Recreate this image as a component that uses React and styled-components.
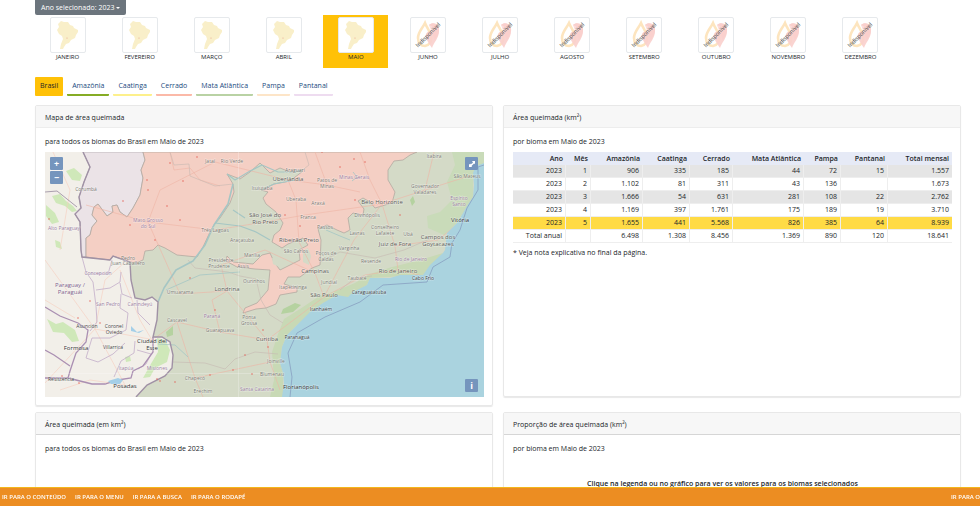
import React, { useState } from 'react'
import styled, { createGlobalStyle } from 'styled-components'

const months = [
  'JANEIRO', 'FEVEREIRO', 'MARÇO', 'ABRIL', 'MAIO', 'JUNHO',
  'JULHO', 'AGOSTO', 'SETEMBRO', 'OUTUBRO', 'NOVEMBRO', 'DEZEMBRO',
]

const biomes = [
  { name: 'Brasil', color: '#ffc107' },
  { name: 'Amazônia', color: '#86ac25' },
  { name: 'Caatinga', color: '#fdf08c' },
  { name: 'Cerrado', color: '#fbb9a8' },
  { name: 'Mata Atlântica', color: '#b9d2a4' },
  { name: 'Pampa', color: '#fde5c8' },
  { name: 'Pantanal', color: '#eedcf0' },
]

const columns = [
  { name: 'Ano', width: 53 },
  { name: 'Mês', width: 25 },
  { name: 'Amazônia', width: 52 },
  { name: 'Caatinga', width: 47 },
  { name: 'Cerrado', width: 43 },
  { name: 'Mata Atlântica', width: 71 },
  { name: 'Pampa', width: 37 },
  { name: 'Pantanal', width: 47 },
  { name: 'Total mensal', width: 64 },
]

const rows = [
  ['2023', '1', '906', '335', '185', '44', '72', '15', '1.557'],
  ['2023', '2', '1.102', '81', '311', '43', '136', '', '1.673'],
  ['2023', '3', '1.666', '54', '631', '281', '108', '22', '2.762'],
  ['2023', '4', '1.169', '397', '1.761', '175', '189', '19', '3.710'],
  ['2023', '5', '1.655', '441', '5.568', '826', '385', '64', '8.939'],
  ['Total anual', '', '6.498', '1.308', '8.456', '1.369', '890', '120', '18.641'],
]

// [name, x, y, kind]
const places = [
  ['Corumbá', 86, 191, 'city'],
  ['Alto Paraguay', 64, 230, 'region'],
  ['Mato Grosso', 148, 222, 'region'],
  ['do Sul', 148, 228, 'region'],
  ['Três Lagoas', 215, 232, 'city'],
  ['Araçatuba', 242, 242, 'city'],
  ['Jataí', 210, 163, 'city'],
  ['Rio Verde', 232, 163, 'city'],
  ['Ituiutaba', 262, 190, 'city'],
  ['Araguari', 295, 172, 'city'],
  ['Uberlândia', 288, 181, 'town'],
  ['Patos de', 327, 182, 'city'],
  ['Minas', 327, 188, 'city'],
  ['Minas Gerais', 354, 179, 'region'],
  ['Uberaba', 296, 201, 'city'],
  ['Araxá', 318, 205, 'city'],
  ['São José do', 265, 217, 'town'],
  ['Rio Preto', 265, 224, 'town'],
  ['Franca', 308, 219, 'city'],
  ['Belo Horizonte', 382, 204, 'town'],
  ['Itabira', 434, 158, 'city'],
  ['Governador', 425, 188, 'city'],
  ['Valadares', 425, 194, 'city'],
  ['Espírito', 459, 200, 'region'],
  ['Santo', 459, 206, 'region'],
  ['São Mateus', 467, 178, 'city'],
  ['Vitória', 460, 222, 'dark'],
  ['Divinópolis', 367, 217, 'city'],
  ['Passos', 325, 229, 'city'],
  ['Lavras', 357, 235, 'city'],
  ['Conselheiro', 385, 229, 'city'],
  ['Lafaiete', 385, 235, 'city'],
  ['Ubá', 408, 236, 'city'],
  ['Ribeirão Preto', 299, 242, 'town'],
  ['Varginha', 349, 250, 'city'],
  ['Juiz de Fora', 395, 246, 'town'],
  ['Campos dos', 438, 239, 'town'],
  ['Goytacazes', 438, 246, 'town'],
  ['São Carlos', 296, 253, 'city'],
  ['Poços de', 326, 255, 'city'],
  ['Caldas', 326, 261, 'city'],
  ['Resende', 371, 263, 'city'],
  ['Rio de Janeiro', 411, 261, 'region'],
  ['Campinas', 315, 273, 'town'],
  ['Rio de Janeiro', 398, 273, 'town'],
  ['Cabo Frio', 423, 280, 'coast'],
  ['Taubaté', 357, 280, 'city'],
  ['Jundiaí', 329, 284, 'city'],
  ['Itapetininga', 293, 289, 'city'],
  ['São Paulo', 324, 297, 'town'],
  ['Caraguatatuba', 369, 294, 'coast'],
  ['Itanhaém', 321, 311, 'coast'],
  ['Paranaguá', 297, 339, 'coast'],
  ['Joinville', 276, 363, 'city'],
  ['Florianópolis', 301, 389, 'dark'],
  ['Pedro', 128, 260, 'city'],
  ['Juan Caballero', 128, 265, 'city'],
  ['Concepción', 98, 275, 'region'],
  ['Paraguay /', 70, 287, 'nation'],
  ['Paraguái', 70, 294, 'nation'],
  ['San Pedro', 108, 306, 'region'],
  ['Canindeyú', 140, 306, 'region'],
  ['Asunción', 87, 328, 'coast'],
  ['Coronel', 114, 328, 'coast'],
  ['Oviedo', 114, 334, 'coast'],
  ['Formosa', 76, 350, 'dark'],
  ['Villarrica', 113, 349, 'coast'],
  ['Ciudad del', 152, 343, 'dark'],
  ['Este', 152, 350, 'dark'],
  ['Itapúa', 126, 370, 'region'],
  ['Misiones', 157, 370, 'region'],
  ['Resistencia', 61, 381, 'coast'],
  ['Posadas', 125, 388, 'dark'],
  ['Presidente', 221, 262, 'city'],
  ['Prudente', 219, 268, 'city'],
  ['Assis', 243, 268, 'city'],
  ['Marília', 252, 257, 'city'],
  ['Ourinhos', 254, 283, 'city'],
  ['Londrina', 227, 291, 'town'],
  ['Umuarama', 180, 294, 'city'],
  ['Paraná', 212, 318, 'region'],
  ['Ponta', 249, 319, 'city'],
  ['Grossa', 249, 325, 'city'],
  ['Cascavel', 177, 322, 'city'],
  ['Guarapuava', 220, 332, 'city'],
  ['Curitiba', 267, 341, 'town'],
  ['Chapecó', 195, 380, 'city'],
  ['Erechim', 203, 393, 'city'],
  ['Santa Catarina', 257, 391, 'region'],
  ['Blumenau', 272, 376, 'city'],
]

const fires = [
  [123, 201], [167, 206], [183, 181], [130, 225], [180, 220], [147, 180], [170, 163],
  [197, 157], [155, 240], [148, 190], [49, 219], [90, 301], [78, 318], [100, 323],
  [190, 278], [215, 310], [160, 381], [157, 379], [210, 375], [233, 370], [252, 374],
  [354, 159], [365, 162], [322, 152], [340, 167], [285, 215], [300, 226], [355, 200],
  [263, 330], [268, 347], [79, 383], [245, 355], [400, 215], [62, 376], [175, 382],
]

const GlobalStyle = createGlobalStyle`
  * {
    box-sizing: border-box;
  }

  body {
    margin: 0;
    background: #fff;
    color: #212529;
    font-family: 'Open Sans', 'Noto Sans', sans-serif;
    font-size: 7px;
    line-height: 10px;
  }

  button {
    font: inherit;
    color: inherit;
    border: none;
    padding: 0;
    background: none;
    cursor: pointer;
  }
`

function SouthAmerica() {
  return (
    <svg viewBox="0 0 32 32" width="32" height="32">
      <path
        d="M6 5 L9 2 L12 3 L16 3 L18 6 L21 7 L22 9 L26 11 L26 13 L24 16 L23 19 L19 21 L17 24 L14 25 L12 28 L11 30 L8 30 L9 25 L11 20 L10 17 L7 15 L5 11 L7 8 Z"
        fill="#f9efc9"
      />
      <circle cx="15" cy="19" r="0.6" fill="#e8a58e" />
    </svg>
  )
}

function Unavailable() {
  return (
    <svg viewBox="0 0 32 32" width="32" height="32">
      <path
        d="M13 4 C10 10 6 13 6 19 C6 24 9 27 13 27 C17 26 20 23 19 17 C18 12 15 9 13 4 Z"
        fill="none"
        stroke="#fde5bf"
        strokeWidth="2.6"
      />
      <path
        d="M17 6 C21 2 28 5 27 12 C27 19 22 23 20 29 C17 24 13 20 14 15 C15 12 18 12 21 13 C23 9 20 7 17 6 Z"
        fill="#f9cfcc"
        fillOpacity="0.9"
      />
      <path d="M17 6 C21 2 28 5 27 12 C26 17 24 19 23 21 L20 14 Z" fill="#f9cfcc" fillOpacity="0.7" />
      <text
        x="16"
        y="18"
        transform="rotate(-45 16 16)"
        textAnchor="middle"
        fontFamily="Liberation Sans, sans-serif"
        fontSize="6"
        fill="#555"
      >
        Indisponível
      </text>
    </svg>
  )
}

const labelColors = { dark: '#333', coast: '#444', town: '#5c5c58', city: '#7b7b75', region: '#9b7fa3', nation: '#7d5f8c' }
const labelSizes = { dark: 6, coast: 5, town: 6, city: 5, region: 5, nation: 6 }

function BurnedMap() {
  return (
    <MapSvg viewBox="45 152 439 245" preserveAspectRatio="xMidYMid slice" role="img" aria-label="Mapa de área queimada">
      <rect x="45" y="152" width="439" height="245" fill="#d4dac7" />

      {/* Paraguay and Argentina */}
      <path
        d="M45 152 H83 L90 167 L84 182 L79 197 L81 208 L75 214 L80 222 L81 250 L82 257 L110 260 L113 256 L130 262 L131 280 L135 298 L145 300 L152 297 L158 302 L157 320 L153 337 L162 337 L170 342 L173 355 L172 368 L165 376 L147 385 L136 397 H45 Z"
        fill="#f2efe9"
      />
      <g fill="#cfe8b9">
        <path d="M52 196 L60 194 L66 201 L73 206 L77 211 L72 212 L65 206 L56 203 Z" />
        <path d="M46 205 L55 213 L59 222 L52 224 L46 216 Z" />
        <path d="M47 319 L56 324 L63 322 L75 330 L79 341 L72 342 L64 333 L53 332 Z" />
        <path d="M157 338 L165 340 L170 350 L167 362 L155 368 L150 377 L143 378 L152 362 L158 352 Z" />
        <path d="M66 171 L74 168 L82 175 L80 181 L72 180 Z M55 240 L60 242 L62 249 L56 247 Z M125 357 l5 -1 l1 5 l-5 1 Z" />
      </g>
      <g fill="none" stroke="#f6cdbd" strokeWidth="0.6">
        <path d="M45 260 L95 329 L45 383 M95 329 L155 340 M95 329 L125 385 M95 329 L105 280 L125 262 M60 390 L90 380 L125 385 M45 300 L75 318 M120 270 L140 320 L152 340 M53 152 L70 190 L60 250" />
      </g>
      <g fill="none" stroke="#c3adc9" strokeWidth="0.8">
        <path d="M82 257 L86 272 L93 282 L96 306 L97 322 L90 331 M90 274 L108 274 L112 260 M96 290 L110 288 L120 282 L121 272 M120 283 L122 294 L132 298 M121 294 L120 308 L128 313 L126 330 L110 338 L92 338 L86 358 L98 362 L113 354 L125 343 M137 300 L138 313 L150 325 M135 341 L134 353 L121 361 L114 377 M137 350 L151 354 L146 364 L138 369" />
      </g>
      <path
        d="M45 307 L60 316 L78 323 L88 330 L86 342 L76 353 L70 371 L68 378 L45 378 M68 378 L92 384 L105 384 L118 380 L131 378 L133 371 L143 366 L153 352 L153 337 M45 350 L54 355 L70 366"
        fill="none"
        stroke="#aa8fb2"
        strokeWidth="1.3"
      />
      <path d="M108 381 L118 378 L123 380 L120 384 L111 384 Z M131 326 L137 332 L144 330 L139 333 L131 331 Z" fill="#a4cfe8" />
      <path d="M45 192 L57 191 L77 207" fill="none" stroke="#aa9fae" strokeWidth="1" />

      {/* Pantanal */}
      <path
        d="M83 152 H143 L145 160 L141 170 L143 178 L140 195 L133 208 L127 217 L120 212 L117 205 L112 206 L113 212 L107 216 L98 204 L94 207 L92 215 L97 221 L92 227 L90 235 L86 238 L86 257 H82 L81 250 L80 222 L75 214 L81 208 L79 197 L84 182 L90 167 Z"
        fill="#ebe3e7"
        stroke="#ada8ae"
        strokeWidth="0.7"
      />

      {/* Cerrado */}
      <path
        d="M143 152 H417 L410 155 L403 160 L394 161 L388 170 L388 180 L395 192 L392 203 L375 208 L370 202 L363 198 L358 201 L364 209 L363 215 L353 213 L348 218 L350 230 L344 233 L337 230 L327 225 L318 229 L321 240 L320 265 L312 268 L300 277 L288 277 L284 284 L297 288 L297 292 L280 295 L276 304 L266 308 L256 309 L243 313 L245 308 L257 303 L268 290 L270 270 L255 269 L237 267 L226 261 L227 256 L233 262 L253 264 L262 255 L270 253 L274 262 L280 270 L292 264 L300 260 L299 250 L308 245 L303 238 L288 244 L282 248 L272 242 L274 235 L280 230 L283 223 L276 212 L266 204 L263 198 L268 192 L261 190 L274 184 L290 181 L303 171 L290 172 L280 168 L270 173 L260 163 L250 172 L240 179 L227 174 L233 184 L234 192 L230 203 L220 218 L214 225 L210 232 L203 247 L197 257 L177 255 L165 248 L158 245 L153 250 L145 251 L143 260 L136 263 L130 262 L113 256 L110 260 L86 257 V238 L90 235 L92 227 L97 221 L92 215 L94 207 L98 204 L107 216 L113 212 L112 206 L117 205 L120 212 L127 217 L133 208 L140 195 L143 178 L141 170 L145 160 Z"
        fill="#f4cfc4"
        stroke="#b3aaa1"
        strokeWidth="0.8"
      />
      <path d="M303 251 l5 -3 l3 8 l-2 9 l-6 -3 Z M272 258 l6 1 l1 8 l-6 -3 Z" fill="#d4dac7" />

      {/* greener slopes next to the coast */}
      <path
        d="M484 152 H452 L455 165 L447 182 L452 200 L440 212 L427 216 L428 228 L444 235 L457 223 L463 213 L473 197 L473 173 L484 163 Z"
        fill="#c9dbb9"
      />
      <path
        d="M443 253 L420 260 L392 267 L370 274 L355 283 L338 290 L318 297 L300 309 L284 319 L278 334 L272 352 L274 380 L270 397 H283 L283 373 L280 363 L282 347 L287 335 L297 325 L323 303 L348 297 L367 285 L370 278 L423 275 Z"
        fill="#c8d9b5"
      />
      <path d="M283 309 l12 -6 l6 2 l-8 7 l-12 2 Z M410 200 l3 -4 l2 6 l-3 4 Z M166 332 l7 -6 v9 l-6 2 Z" fill="#b5d2a0" />

      {/* roads */}
      <g fill="none" stroke="#eeb3a4" strokeWidth="0.6">
        <path d="M86 205 L148 222 L215 230 L265 222 L305 215 L382 204 L425 190 L469 176 M148 222 L160 190 L215 162 L288 180 L327 185 L360 192 M148 222 L165 260 L180 294 L227 291 L267 340 L324 297 L315 273 L299 242 L296 200 L288 180 M324 297 L365 275 L398 270 L423 276 M398 270 L395 246 L382 204 L354 240 L324 297 M227 291 L221 265 L265 250 L315 273 M267 340 L220 332 L177 322 L155 338 M267 340 L270 362 L280 390 M270 362 L195 378 L203 397 M220 332 L212 300 L227 291 M195 378 L177 322 M425 190 L434 152 M395 246 L438 240 L460 222 M170 152 L174 170 L190 168 L200 180 L220 186 M327 185 L315 152 M382 204 L370 180 L360 152" />
      </g>
      <g fill="none" stroke="#c6b9b2" strokeWidth="0.6">
        <path d="M170 152 L174 165 L189 164 L190 176 L215 186 L233 184 M188 260 L195 268 L228 272 L240 276 L256 279 L261 300 L270 315 L283 323 M173 362 L205 363 L225 369 L235 359 L255 352 L278 354 M305 152 L309 165 L300 172 M320 262 L340 252 L375 258 L404 250 L432 238 M340 290 L355 278 L372 276" />
      </g>

      {/* rivers */}
      <g fill="none" stroke="#a5c6c4" strokeLinejoin="round">
        <path d="M233 184 L228 204 L214 225 L205 245 L193 261 L176 270 L164 288 L158 302" strokeWidth="1.6" />
        <path d="M215 223 L240 226 L256 232 L270 240 M233 210 L245 218 M227 174 L235 180 L250 171 L262 165 L278 172 L292 172 L302 170 M262 190 L274 184 L295 180" strokeWidth="1.2" />
        <path d="M166 290 L200 275 L240 272 M326 230 L340 236 L350 240 M353 172 l4 5 l-5 4 M158 344 L175 345 L188 357" strokeWidth="0.8" />
      </g>

      {/* ocean */}
      <path
        d="M484 163 L476 166 L473 173 L474 185 L473 197 L467 206 L463 213 L457 223 L447 233 L445 250 L443 253 L430 265 L423 275 L400 275 L390 278 L370 278 L367 285 L353 292 L348 297 L337 295 L323 303 L310 312 L297 325 L287 335 L282 347 L280 363 L283 373 L284 383 L282 397 H484 Z"
        fill="#aad3df"
      />
      <path
        d="M484 165 L478 167 L478 190 L467 208 L460 230 L452 243 L450 257 L433 267 L427 282 L383 285 L360 302 L325 317 L297 333 L288 353 L292 377 L290 397"
        fill="none"
        stroke="#8ba5c4"
        strokeWidth="0.9"
      />

      {/* country border */}
      <path
        d="M83 152 L90 167 L84 182 L79 197 L81 208 L75 214 L80 222 L81 250 L82 257 L110 260 L113 256 L130 262 L131 280 L135 298 L145 300 L152 297 L158 302 L157 320 L153 337 L162 337 L170 342 L173 355 L172 368 L165 376 L147 385 L136 397"
        fill="none"
        stroke="#a091a5"
        strokeWidth="1.4"
      />
      <path d="M238.500 152 V397 M45 373.500 H280" stroke="#fff" strokeOpacity="0.4" strokeWidth="0.6" />

      {fires.map(([x, y]) => (
        <circle key={`${x}-${y}`} cx={x} cy={y} r="0.7" fill="#e2564c" />
      ))}
      {places.map(([name, x, y, kind]) => (
        <text
          key={`${name}-${y}`}
          x={x}
          y={y}
          textAnchor="middle"
          fontSize={labelSizes[kind]}
          fill={labelColors[kind]}
          stroke="#fff"
          strokeOpacity="0.4"
          strokeWidth="1"
          paintOrder="stroke"
        >
          {name}
        </text>
      ))}
    </MapSvg>
  )
}

export default function App() {
  const [month, setMonth] = useState('MAIO')
  const [biome, setBiome] = useState('Brasil')

  return (
    <Page>
      <GlobalStyle />
      <Content>
        <YearButton type="button">
          Ano selecionado: 2023
          <Caret />
        </YearButton>

        <MonthList>
          {months.map((name, i) => (
            <MonthButton key={name} type="button" $active={name === month} onClick={() => setMonth(name)}>
              <Thumb>{i < 5 ? <SouthAmerica /> : <Unavailable />}</Thumb>
              {name}
            </MonthButton>
          ))}
        </MonthList>

        <Tabs>
          {biomes.map(({ name, color }) => (
            <Tab key={name} type="button" $color={color} $active={name === biome} onClick={() => setBiome(name)}>
              {name}
            </Tab>
          ))}
        </Tabs>

        <Cards>
          <Card>
            <CardHeader>Mapa de área queimada</CardHeader>
            <CardBody>
              <Subtitle>para todos os biomas do Brasil em Maio de 2023</Subtitle>
              <MapFrame>
                <BurnedMap />
                <ZoomControl>
                  <MapButton type="button" aria-label="Aproximar">+</MapButton>
                  <MapButton type="button" aria-label="Afastar">−</MapButton>
                </ZoomControl>
                <FullscreenControl>
                  <MapButton type="button" aria-label="Tela cheia">
                    <svg viewBox="0 0 8 8" width="8" height="8">
                      <path d="M4 1 H7 V4 L6 3.500 L4.500 5 L3.500 4 L5 2.500 Z M1 7 V4 L2 4.500 L3 3.500 L4.500 5 L3.500 6 L4 7 Z" fill="#fff" />
                    </svg>
                  </MapButton>
                </FullscreenControl>
                <InfoControl>
                  <MapButton type="button" aria-label="Informações">i</MapButton>
                </InfoControl>
              </MapFrame>
            </CardBody>
          </Card>

          <TableCard>
            <CardHeader>Área queimada (km²)</CardHeader>
            <CardBody>
              <Subtitle>por bioma em Maio de 2023</Subtitle>
              <Table>
                <colgroup>
                  {columns.map((c) => (
                    <Col key={c.name} $width={c.width} />
                  ))}
                </colgroup>
                <thead>
                  <tr>
                    {columns.map((c) => (
                      <th key={c.name} scope="col">{c.name}</th>
                    ))}
                  </tr>
                </thead>
                <tbody>
                  {rows.map((row, i) => (
                    <Row key={i} $striped={i % 2 === 0 && i < 4} $current={i === 4}>
                      {row.map((value, j) => (
                        <td key={j}>{value}</td>
                      ))}
                    </Row>
                  ))}
                </tbody>
              </Table>
              <Note>* Veja nota explicativa no final da página.</Note>
            </CardBody>
          </TableCard>

          <ChartCard>
            <CardHeader $ruled>Área queimada (em km²)</CardHeader>
            <CardBody>
              <Subtitle>para todos os biomas do Brasil em Maio de 2023</Subtitle>
            </CardBody>
          </ChartCard>

          <ChartCard>
            <CardHeader $ruled>Proporção de área queimada (km²)</CardHeader>
            <CardBody>
              <Subtitle>por bioma em Maio de 2023</Subtitle>
              <ChartTitle>Clique na legenda ou no gráfico para ver os valores para os biomas selecionados</ChartTitle>
            </CardBody>
          </ChartCard>
        </Cards>
      </Content>

      <SkipBar>
        <SkipLink href="#conteudo">IR PARA O CONTEÚDO</SkipLink>
        <SkipLink href="#menu">IR PARA O MENU</SkipLink>
        <SkipLink href="#busca">IR PARA A BUSCA</SkipLink>
        <SkipLink href="#rodape">IR PARA O RODAPÉ</SkipLink>
        <SkipLink href="#topo" $end>IR PARA O</SkipLink>
      </SkipBar>
    </Page>
  )
}

const Page = styled.div`
  height: 100vh;
  overflow: hidden;
`

const Content = styled.main`
  padding: 0 19px 0 35px;
`

const YearButton = styled.button`
  display: flex;
  align-items: center;
  gap: 2px;
  height: 15px;
  padding: 0 6px;
  border-radius: 0 0 2px 2px;
  background: #6c757d;
  color: #fff;
`

const Caret = styled.span`
  border: 2px solid transparent;
  border-top-color: #fff;
  border-bottom: none;
`

const MonthList = styled.div`
  display: grid;
  grid-template-columns: repeat(12, 1fr);
  gap: 7px;
  margin-right: 68px;
`

const MonthButton = styled.button`
  display: flex;
  flex-direction: column;
  align-items: center;
  height: 53px;
  padding-top: 2px;
  background: ${(p) => (p.$active ? '#ffc107' : 'transparent')};
  font-size: 6px;
  line-height: 8px;
`

const Thumb = styled.span`
  display: block;
  width: 36px;
  height: 36px;
  padding: 1px;
  border: 1px solid #e6e9ec;
  border-radius: 2px;
  background: #fff;

  svg {
    display: block;
  }
`

const Tabs = styled.nav`
  display: flex;
  gap: 4px;
  margin-top: 9px;
`

const Tab = styled.button`
  height: 19px;
  padding: 0 5px;
  border-bottom: 2px solid ${(p) => p.$color};
  border-radius: 1px;
  background: ${(p) => (p.$active ? '#ffc107' : 'transparent')};
  color: ${(p) => (p.$active ? '#212529' : '#1a4a80')};
`

const Cards = styled.div`
  display: grid;
  grid-template-columns: 1fr 1fr;
  align-items: start;
  gap: 6px 10px;
  margin-top: 9px;
`

const Card = styled.section`
  border: 1px solid #e8e8e8;
  border-radius: 2px;
  box-shadow: 0 1px 1px #e8e8e8;
`

const TableCard = styled(Card)`
  min-height: 292px;
`

const ChartCard = styled(Card)`
  min-height: 200px;
`

const CardHeader = styled.h2`
  margin: 0;
  height: 22px;
  padding: 0 9px;
  border-bottom: 1px solid ${(p) => (p.$ruled ? '#d6d6d6' : '#ededed')};
  background: #f7f7f7;
  font-size: 7px;
  font-weight: 400;
  line-height: 23px;
`

const CardBody = styled.div`
  padding: 8px 8px 8px 9px;
`

const Subtitle = styled.p`
  margin: 0 0 4px;
  line-height: 12px;
`

const MapFrame = styled.div`
  position: relative;
  aspect-ratio: 439 / 245;
  overflow: hidden;
`

const MapSvg = styled.svg`
  display: block;
  width: 100%;
  height: 100%;
`

const MapControl = styled.div`
  position: absolute;
  display: flex;
  flex-direction: column;
  gap: 1px;
  border-radius: 2px;
  background: rgba(255, 255, 255, 0.4);
`

const ZoomControl = styled(MapControl)`
  top: 5px;
  left: 5px;
`

const FullscreenControl = styled(MapControl)`
  top: 5px;
  right: 6px;
`

const InfoControl = styled(MapControl)`
  right: 6px;
  bottom: 5px;
`

const MapButton = styled.button`
  display: flex;
  align-items: center;
  justify-content: center;
  width: 13px;
  height: 13px;
  border-radius: 1px;
  background: #7595bd;
  color: #fff;
  font-size: 9px;
  font-weight: 700;
`

const Table = styled.table`
  width: 100%;
  table-layout: fixed;
  border-collapse: separate;
  border-spacing: 0;

  th,
  td {
    height: 13px;
    padding: 0 3px 0 0;
    line-height: 12px;
    text-align: right;
    white-space: nowrap;
  }

  th {
    background: #e6eaf6;
    font-weight: 600;
  }

  td {
    border-right: 1px solid #eee;
    border-bottom: 1px solid #eee;
  }

  td:last-child {
    border-right: none;
  }
`

const Col = styled.col`
  width: ${(p) => (p.$width / 439) * 100}%;
`

const Row = styled.tr`
  background: ${(p) => (p.$current ? '#ffdb45' : p.$striped ? '#e5e5e5' : '#fff')};
`

const Note = styled.p`
  margin: 5px 0 0;
`

const ChartTitle = styled.h3`
  margin: 24px 0 0;
  padding-right: 20px;
  font-size: 7px;
  font-weight: 600;
  text-align: center;
`

const SkipBar = styled.footer`
  position: fixed;
  left: 0;
  right: 0;
  bottom: 0;
  display: flex;
  align-items: center;
  gap: 9px;
  height: 19px;
  padding-left: 2px;
  border-top: 1px solid #f3b71c;
  background: #ec8d22;
`

const SkipLink = styled.a`
  margin-left: ${(p) => (p.$end ? 'auto' : '0')};
  color: #fff;
  font-size: 6px;
  font-weight: 600;
  line-height: 8px;
  text-decoration: none;
  white-space: nowrap;
`
